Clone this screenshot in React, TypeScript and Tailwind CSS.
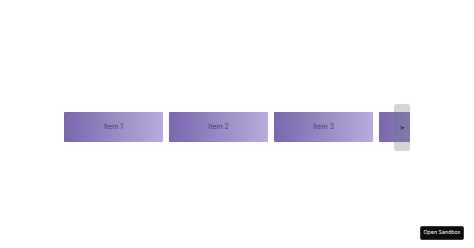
import React from "react";

const items = ["Item 1", "Item 2", "Item 3", "Item 4"];

export default function App() {
  return (
    <div
      className="relative h-[248px] w-full bg-white flex items-center justify-center pt-[6px]"
      style={{ fontFamily: "Inter, 'Noto Sans', sans-serif" }}
    >
      <div className="relative w-[346px]">
        <div className="flex gap-[6px] overflow-hidden">
          {items.map((t) => (
            <div
              key={t}
              className="shrink-0 w-[99px] h-[30px] rounded-[1px] flex items-center justify-center bg-gradient-to-r from-[#7a67ad] to-[#b9acdd] shadow-[0_0_1px_rgba(0,0,0,0.15)]"
            >
              <span className="text-[7px] text-[#4a4558]">{t}</span>
            </div>
          ))}
        </div>
        <div className="absolute right-0 top-[-8px] w-[16px] h-[47px] rounded-[3px] bg-[rgba(100,116,139,0.3)] flex items-center justify-center">
          <span className="text-[7px] leading-none text-[#1f1f2e] font-semibold">&gt;</span>
        </div>
      </div>
      <div className="absolute right-[10px] bottom-[8px] h-[14px] w-[44px] rounded-[2px] bg-[#0b0b0b] border border-[#3a3a3a] flex items-center justify-center">
        <span className="text-[5.3px] leading-none text-white whitespace-nowrap">Open Sandbox</span>
      </div>
    </div>
  );
}
